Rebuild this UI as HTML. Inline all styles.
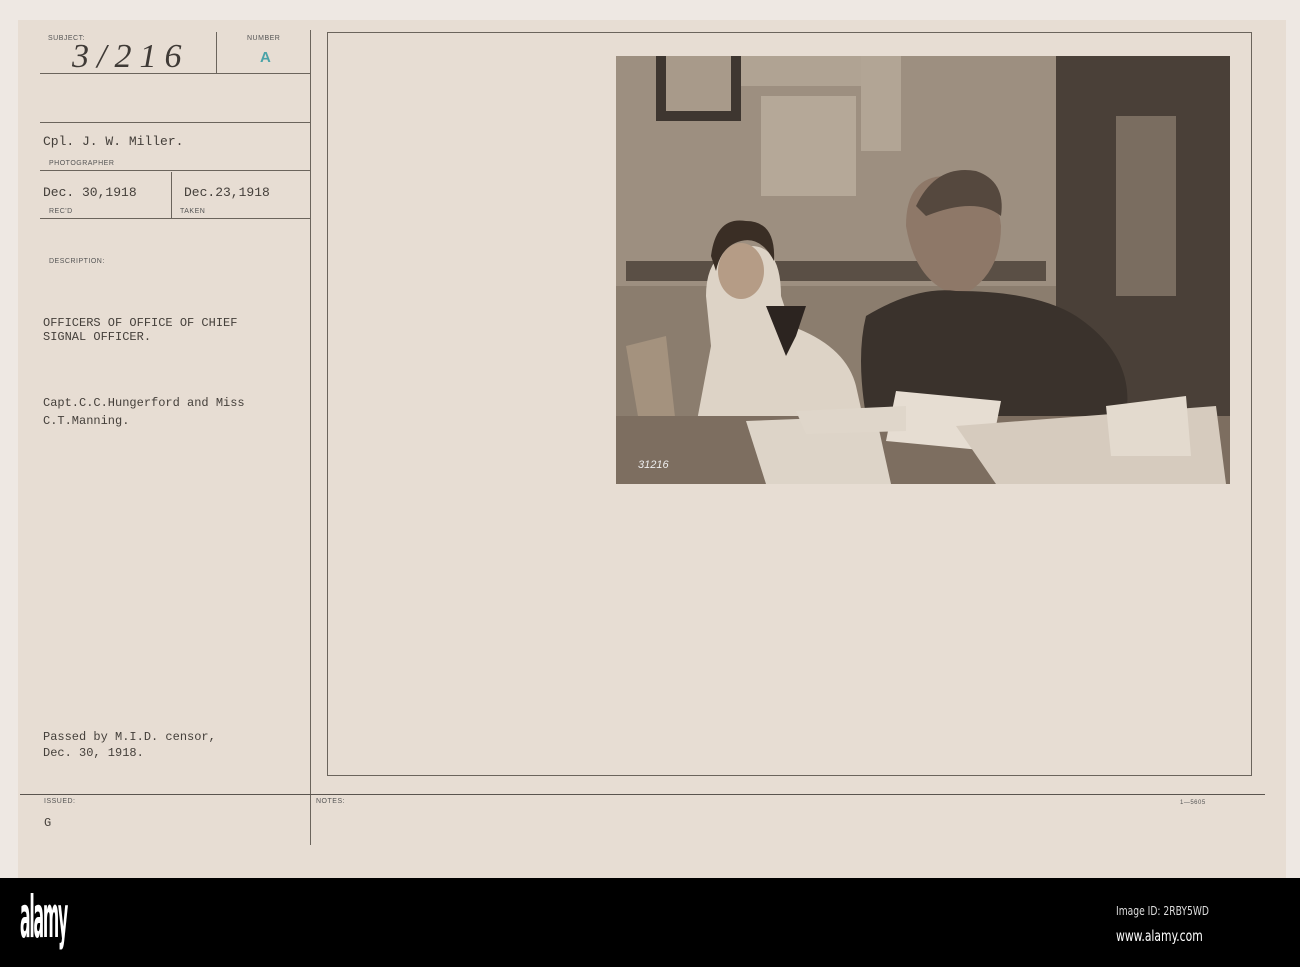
<!DOCTYPE html>
<html><head><meta charset="utf-8"><style>
body{margin:0;width:1300px;height:967px;background:#eee8e3;position:relative;overflow:hidden;font-family:"Liberation Mono",monospace;color:#4a4540}
.card{position:absolute;left:18px;top:20px;width:1268px;height:858px;background:#e7ddd3}
.a{position:absolute}
.h{position:absolute;height:1px;background:#6b645c}
.v{position:absolute;width:1px;background:#6b645c}
.lbl{position:absolute;font-family:"Liberation Sans",sans-serif;font-size:7px;letter-spacing:.5px;color:#555}
.t{position:absolute;font-size:13px;color:#443f3a;white-space:nowrap}
.band{position:absolute;left:0;top:878px;width:1300px;height:89px;background:#000}
</style></head><body>
<div class="card"></div>
<div class="h" style="left:40px;top:73px;width:270px"></div>
<div class="h" style="left:40px;top:122px;width:270px"></div>
<div class="h" style="left:40px;top:170px;width:270px"></div>
<div class="h" style="left:40px;top:218px;width:270px"></div>
<div class="v" style="left:216px;top:32px;height:41px"></div>
<div class="v" style="left:171px;top:172px;height:46px"></div>
<div class="v" style="left:310px;top:30px;height:815px"></div>
<div class="h" style="left:20px;top:794px;width:1245px;background:#5a544e"></div>
<div class="a" style="left:327px;top:32px;width:923px;height:742px;border:1px solid #6b645c"></div>
<div class="lbl" style="left:48px;top:35px">SUBJECT:</div>
<div class="lbl" style="left:247px;top:35px">NUMBER</div>
<div class="a" style="left:72px;top:38px;font-family:'Liberation Serif',serif;font-style:italic;font-size:34px;color:#3f3a36;letter-spacing:8px">3/216</div>
<div class="a" style="left:260px;top:49px;font-family:'Liberation Sans',sans-serif;font-weight:bold;font-size:15px;color:#4aa3a8">A</div>
<div class="t" style="left:43px;top:134px">Cpl. J. W. Miller.</div>
<div class="lbl" style="left:49px;top:160px">PHOTOGRAPHER</div>
<div class="t" style="left:43px;top:185px">Dec. 30,1918</div>
<div class="t" style="left:184px;top:185px">Dec.23,1918</div>
<div class="lbl" style="left:49px;top:208px">REC'D</div>
<div class="lbl" style="left:180px;top:208px">TAKEN</div>
<div class="lbl" style="left:49px;top:258px">DESCRIPTION:</div>
<div class="t" style="left:43px;top:316px;font-size:12px">OFFICERS OF OFFICE OF CHIEF<br>SIGNAL OFFICER.</div>
<div class="t" style="left:43px;top:394px;font-size:12px;line-height:18px">Capt.C.C.Hungerford and Miss<br>C.T.Manning.</div>
<div class="t" style="left:43px;top:729px;font-size:12px;line-height:16px">Passed by M.I.D. censor,<br>Dec. 30, 1918.</div>
<div class="lbl" style="left:44px;top:798px">ISSUED:</div>
<div class="lbl" style="left:316px;top:798px">NOTES:</div>
<div class="lbl" style="left:1180px;top:800px;font-size:6px">1—5605</div>
<div class="t" style="left:44px;top:816px;font-size:12px">G</div>
<svg class="a" style="left:616px;top:56px" width="614" height="428" viewBox="0 0 614 428">
<rect width="614" height="428" fill="#8b7d6e"/>
<rect x="0" y="0" width="440" height="230" fill="#9d8f80"/>
<rect x="440" y="0" width="174" height="428" fill="#4a4038"/>
<rect x="40" y="0" width="85" height="65" fill="#3e3630"/>
<rect x="50" y="0" width="65" height="55" fill="#a89a8a"/>
<rect x="125" y="0" width="150" height="30" fill="#b0a393"/>
<rect x="145" y="40" width="95" height="100" fill="#b5a898"/>
<rect x="245" y="0" width="40" height="95" fill="#b2a595"/>
<rect x="10" y="205" width="420" height="20" fill="#5a4f45"/>
<rect x="500" y="60" width="60" height="180" fill="#7a6d60"/>
<path d="M90 240 Q90 190 135 190 Q165 190 165 240 L175 270 Q230 290 240 330 L250 375 L150 380 L80 370 L95 290 Z" fill="#ddd3c6"/>
<ellipse cx="125" cy="215" rx="23" ry="28" fill="#b59c86"/>
<path d="M95 200 Q100 160 130 165 Q160 165 158 205 Q145 180 125 185 Q105 190 100 215 Z" fill="#3a2e25"/>
<path d="M150 250 L160 275 L170 300 L180 280 L190 250 Z" fill="#2c2420"/>
<path d="M10 290 L50 280 L60 370 L25 378 Z" fill="#a4927e"/>
<path d="M290 170 Q290 120 330 120 Q380 120 385 170 Q385 220 345 240 Q300 230 290 170 Z" fill="#8e7868"/>
<path d="M300 150 Q320 108 360 115 Q390 125 385 160 Q360 140 310 160 Z" fill="#55483e"/>
<path d="M250 260 Q300 230 340 235 Q420 235 460 260 Q520 300 510 360 L480 380 L290 380 L250 360 Q240 300 250 260 Z" fill="#3a322c"/>
<rect x="0" y="360" width="614" height="68" fill="#7d6e60"/>
<path d="M130 365 L260 360 L275 428 L150 428 Z" fill="#ddd4c8"/>
<path d="M280 335 L385 345 L375 395 L270 385 Z" fill="#e6ddd2"/>
<path d="M340 370 L600 350 L610 428 L380 428 Z" fill="#d6cbbe"/>
<path d="M490 350 L570 340 L575 400 L495 400 Z" fill="#e3dace"/>
<path d="M180 355 L290 350 L290 375 L190 378 Z" fill="#dfd6ca"/>
<text x="22" y="412" font-family="Liberation Sans" font-size="11" font-style="italic" fill="#eee">31216</text>
</svg>
<div class="band"></div>
<div class="a" style="left:20px;top:888px;font-family:'DejaVu Sans Condensed','Liberation Sans',sans-serif;font-weight:bold;font-size:58px;color:#fff;letter-spacing:-4px;transform:scaleX(.3);transform-origin:left;line-height:1">alamy</div>
<div class="a" style="left:1116px;top:904px;font-family:'DejaVu Sans Condensed','Liberation Sans',sans-serif;font-size:12px;color:#ddd;transform:scaleX(.85);transform-origin:left">Image ID: 2RBY5WD</div>
<div class="a" style="left:1116px;top:927px;font-family:'DejaVu Sans Condensed','Liberation Sans',sans-serif;font-size:15px;color:#fff;transform:scaleX(.8);transform-origin:left">www.alamy.com</div>
</body></html>
